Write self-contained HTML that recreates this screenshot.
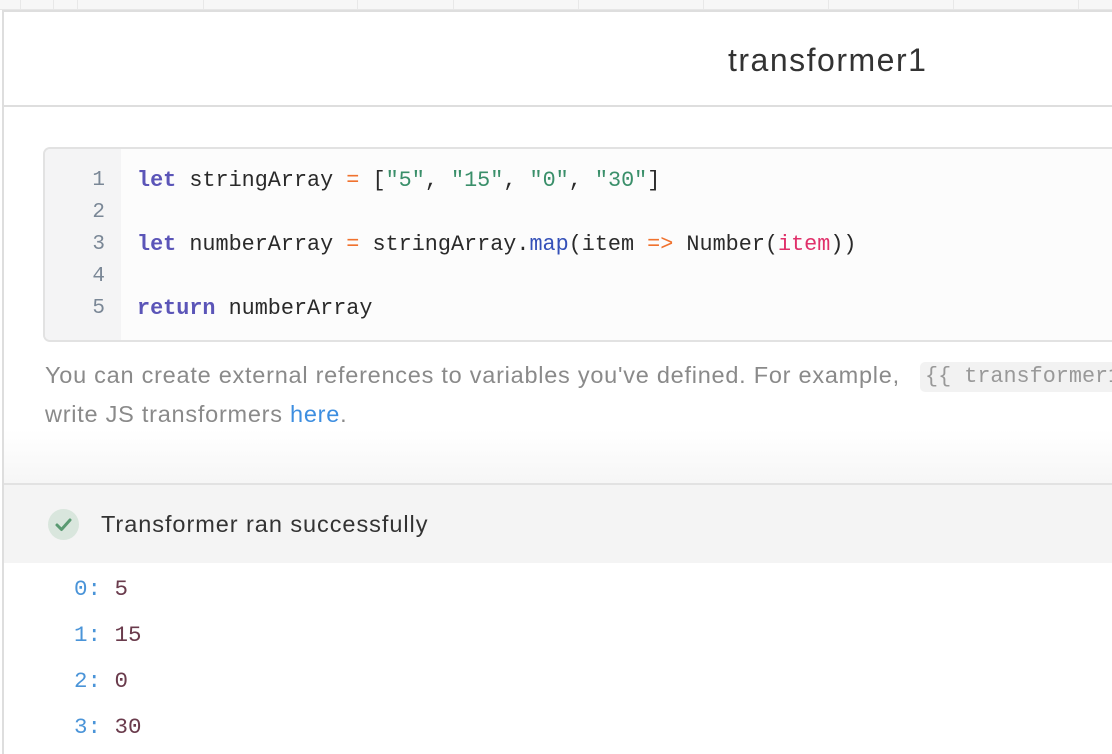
<!DOCTYPE html>
<html><head><meta charset="utf-8"><style>
*{margin:0;padding:0;box-sizing:border-box}
html,body{width:1112px;height:754px;overflow:hidden}
body{background:#fff;font-family:"Liberation Sans",sans-serif;position:relative}
.top{position:absolute;left:0;top:0;width:1112px;height:10px;background:#f7f7f7;border-bottom:1px solid #e6e6e6;overflow:hidden}
.top i{position:absolute;top:0;height:10px;width:1px;background:#e8e8e8}
.lb{position:absolute;left:2px;top:10px;width:2px;height:744px;background:#dedede}
.hdr{position:absolute;left:4px;top:10px;width:1108px;height:97px;border-top:2px solid #dedede;border-bottom:2px solid #dedede}
.title{position:absolute;left:728px;top:42px;font-size:32px;color:#333;letter-spacing:1.5px}
.code{position:absolute;left:43px;top:147px;width:1069px;height:195px;border:2px solid #e2e2e2;border-right:none;border-radius:7px 0 0 7px;background:#fcfcfc;overflow:hidden}
.gut{position:absolute;left:0;top:0;width:76px;height:100%;background:#f4f4f5}
.ln{position:absolute;font-family:"Liberation Mono",monospace;font-size:21px;color:#7a8796;width:60px;text-align:right;left:0}
.cl{position:absolute;left:92px;font-family:"Liberation Mono",monospace;font-size:21.8px;color:#2a2a2a;white-space:pre}
.k{color:#5b55b8;font-weight:bold}.o{color:#f0722e}.s{color:#3a8f6a}.f{color:#3450b8}.p{color:#e0306a}
.help{position:absolute;left:45px;font-size:23.5px;letter-spacing:0.75px;color:#8a8a8a;white-space:nowrap}
.help a{color:#3d8ee0;text-decoration:none}
.ic{position:absolute;left:920px;top:362px;width:192px;height:30px;background:#f2f2f2;border-radius:5px 0 0 5px;font-family:"Liberation Mono",monospace;font-size:21.8px;color:#999;padding:2px 0 0 5px;white-space:pre;overflow:hidden}
.fade{position:absolute;left:4px;top:430px;width:1108px;height:53px;background:linear-gradient(#fff,#f6f6f6)}
.stat{position:absolute;left:4px;top:483px;width:1108px;height:80px;background:#f4f4f4;border-top:2px solid #e2e2e2}
.chk{position:absolute;left:44px;top:24px;width:31px;height:31px;border-radius:50%;background:#d9e6dd}
.st{position:absolute;left:97px;top:26px;font-size:23.5px;letter-spacing:0.95px;color:#333}
.out{position:absolute;left:74px;font-family:"Liberation Mono",monospace;font-size:22.5px;white-space:pre}
.out b{font-weight:normal;color:#4a94d8}.out span{color:#6a3b4c}
</style></head><body>
<div class="top"><i style="left:20px"></i><i style="left:53px"></i><i style="left:77px"></i><i style="left:203px"></i><i style="left:357px"></i><i style="left:453px"></i><i style="left:578px"></i><i style="left:703px"></i><i style="left:828px"></i><i style="left:953px"></i><i style="left:1078px"></i></div>
<div class="lb"></div>
<div class="hdr"></div>
<div class="title">transformer1</div>
<div class="code"><div class="gut"></div>
<div class="ln" style="top:20px">1</div><div class="ln" style="top:52px">2</div><div class="ln" style="top:84px">3</div><div class="ln" style="top:116px">4</div><div class="ln" style="top:148px">5</div>
<div class="cl" style="top:19px"><span class="k">let</span> stringArray <span class="o">=</span> [<span class="s">"5"</span>, <span class="s">"15"</span>, <span class="s">"0"</span>, <span class="s">"30"</span>]</div>
<div class="cl" style="top:83px"><span class="k">let</span> numberArray <span class="o">=</span> stringArray.<span class="f">map</span>(item <span class="o">=&gt;</span> Number(<span class="p">item</span>))</div>
<div class="cl" style="top:147px"><span class="k">return</span> numberArray</div>
</div>
<div class="help" style="top:362px">You can create external references to variables you've defined. For example,</div>
<div class="ic">{{ transformer1.value }}</div>
<div class="help" style="top:401px">write JS transformers <a>here</a>.</div>
<div class="fade"></div>
<div class="stat"><div class="chk"><svg width="31" height="31" viewBox="0 0 31 31"><path d="M9 16l4.5 4.5L22 11" fill="none" stroke="#5a9a72" stroke-width="3" stroke-linecap="round" stroke-linejoin="round"/></svg></div><div class="st">Transformer ran successfully</div></div>
<div class="out" style="top:576px"><b>0:</b> <span>5</span></div>
<div class="out" style="top:622px"><b>1:</b> <span>15</span></div>
<div class="out" style="top:668px"><b>2:</b> <span>0</span></div>
<div class="out" style="top:714px"><b>3:</b> <span>30</span></div>
</body></html>
